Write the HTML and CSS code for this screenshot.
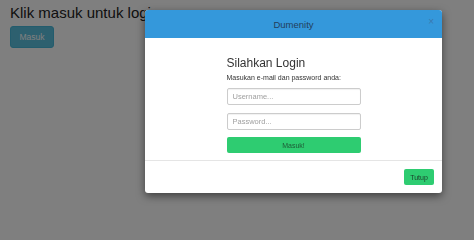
FILE: index.html
```html
<!DOCTYPE html>
<html lang="id">
<head>
<meta charset="utf-8">
<title>Dumenity</title>
<link rel="stylesheet" href="styles.css">
</head>
<body>
<div class="page">
  <h1 class="page-title">Klik masuk untuk login</h1>
  <button class="btn-open">Masuk</button>
</div>
<div class="backdrop"></div>
<div class="modal">
  <div class="modal-header">
    <span class="modal-title">Dumenity</span>
    <span class="close">&times;</span>
  </div>
  <div class="modal-body">
    <form class="login">
      <h3 class="login-title">Silahkan Login</h3>
      <p class="login-sub">Masukan e-mail dan password anda:</p>
      <input class="field" type="text" placeholder="Username...">
      <input class="field field-pass" type="password" placeholder="Password...">
      <button class="btn-login" type="button">Masuk!</button>
    </form>
  </div>
  <div class="modal-footer">
    <button class="btn-close" type="button">Tutup</button>
  </div>
</div>
</body>
</html>
```
FILE: styles.css
```css
html, body {
  margin: 0;
  padding: 0;
  height: 100%;
}
body {
  background: #ffffff;
  font-family: "Liberation Sans", Arial, sans-serif;
  color: #333;
  overflow: hidden;
}
.page {
  padding: 4px 10px;
  display: flex;
  flex-direction: column;
  align-items: flex-start;
}
.page-title {
  font-size: 15px;
  font-weight: normal;
  line-height: 18px;
  margin: 0 0 4px 0;
  color: #222;
}
.btn-open {
  width: 44px;
  height: 22px;
  background: #5bc0de;
  border: 1px solid #46b8da;
  border-radius: 3px;
  color: #fff;
  font-family: "Liberation Sans", Arial, sans-serif;
  font-size: 8.5px;
  padding: 0;
}
.backdrop {
  position: fixed;
  inset: 0;
  background: rgba(0, 0, 0, 0.5);
}
.modal {
  position: absolute;
  left: 145px;
  top: 10px;
  width: 297px;
  height: 183px;
  background: #fff;
  border-radius: 3px;
  box-shadow: 0 3px 9px rgba(0, 0, 0, 0.5);
  display: flex;
  flex-direction: column;
  overflow: hidden;
}
.modal-header {
  position: relative;
  height: 28px;
  background: #3498db;
  display: flex;
  align-items: center;
  justify-content: center;
  flex-shrink: 0;
}
.modal-title {
  font-size: 9.5px;
  color: #233f5c;
}
.close {
  position: absolute;
  right: 8px;
  top: 6px;
  font-size: 10px;
  line-height: 12px;
  color: #3a78b0;
}
.modal-body {
  height: 123px;
  display: flex;
  justify-content: center;
  border-bottom: 1px solid #e5e5e5;
  box-sizing: border-box;
  flex-shrink: 0;
}
.login {
  width: 134px;
  display: flex;
  flex-direction: column;
  padding-top: 18px;
}
.login-title {
  margin: 0;
  font-size: 12px;
  line-height: 14px;
  font-weight: normal;
  color: #333;
}
.login-sub {
  margin: 3px 0 0 0;
  font-size: 7px;
  line-height: 10px;
  color: #333;
}
.field {
  margin: 5px 0 0 0;
  height: 17px;
  box-sizing: border-box;
  border: 1px solid #ccc;
  border-radius: 2px;
  padding: 0 5px;
  font-family: "Liberation Sans", Arial, sans-serif;
  font-size: 7.5px;
  color: #555;
  background: #fff;
  box-shadow: inset 0 1px 1px rgba(0, 0, 0, 0.06);
}
.field::placeholder {
  color: #a0a0a0;
}
.field-pass {
  margin-top: 8px;
}
.btn-login {
  margin-top: 7px;
  height: 16px;
  border: none;
  border-radius: 2px;
  background: #2ecc71;
  color: #1e5a36;
  font-family: "Liberation Sans", Arial, sans-serif;
  font-size: 7px;
  padding: 0;
}
.modal-footer {
  flex: 1;
  display: flex;
  align-items: center;
  justify-content: flex-end;
  padding: 0 8px;
}
.btn-close {
  width: 30px;
  height: 16px;
  border: none;
  border-radius: 2px;
  background: #2ecc71;
  color: #1b3d29;
  font-family: "Liberation Sans", Arial, sans-serif;
  font-size: 7px;
  padding: 0;
}
```
